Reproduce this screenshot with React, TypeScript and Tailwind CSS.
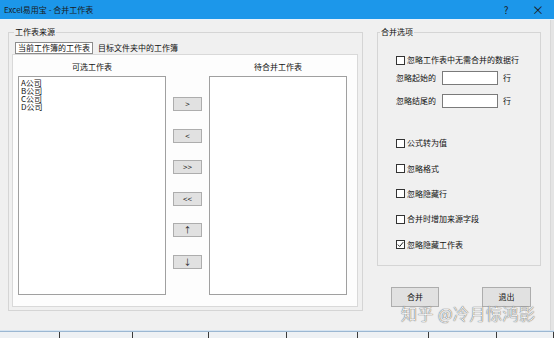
import React from 'react';

const font = "font-['Noto_Sans_CJK_SC','Noto_Sans',sans-serif]";

const moveButtons = ['>', '<', '>>', '<<', '↑', '↓'];
const sheets = ['A公司', 'B公司', 'C公司', 'D公司'];
const stripWidths = [60, 73, 76, 78, 71, 71, 68, 57];

const CheckBox = ({ checked }: { checked?: boolean }) => (
  <span className="w-[9px] h-[9px] border border-[#333333] bg-white flex items-center justify-center shrink-0">
    {checked && (
      <svg width="7" height="7" viewBox="0 0 7 7" fill="none">
        <path d="M0.8 3.6 L2.7 5.5 L6.2 1.2" stroke="#222" strokeWidth="1" />
      </svg>
    )}
  </span>
);

const CheckRow = ({ label, checked, className }: { label: string; checked?: boolean; className: string }) => (
  <div className={`h-[12px] flex items-center ${className}`}>
    <CheckBox checked={checked} />
    <span className="ml-[2px] leading-[12px]">{label}</span>
  </div>
);

const SkipRow = ({ label, className }: { label: string; className: string }) => (
  <div className={`h-[14px] flex items-center ${className}`}>
    <span className="w-[46px] leading-[14px]">{label}</span>
    <div className="w-[56px] h-[14px] border border-[#7a7a7a] bg-white" />
    <span className="ml-[5px] leading-[14px]">行</span>
  </div>
);

export default function App() {
  return (
    <div className={`w-[554px] h-[338px] flex flex-col bg-[#f0f0f0] text-[8px] text-[#111] ${font} overflow-hidden`}>
      {/* title bar */}
      <div className="h-[20px] bg-[#1c97ea] flex items-center pl-[4px] text-[#1a1a1a] border-b border-[#e8f2fb]">
        <span className="leading-[12px]">Excel易用宝 - 合并工作表</span>
        <span className="ml-auto text-[10px] w-[10px] text-center">?</span>
        <span className="ml-[21px] mr-[12px] text-[12px] w-[10px] text-center leading-[12px]">×</span>
      </div>

      <div className="h-[310px] flex">
        <div className="w-[551px] flex pt-[7px] pl-[8px] border-r border-[#d8d8d8]">
          {/* left group */}
          <fieldset className="w-[355px] h-[284px] border border-[#d5d5d5] pl-[3px] pr-[4px]">
            <legend className="ml-[2px] px-[1px] leading-[10px]">工作表来源</legend>
            <div className="mt-[5px] h-[12px] flex items-center">
              <div className="ml-[3px] w-[78px] h-[12px] border border-[#8c8c8c] bg-white flex items-center justify-center leading-[10px]">
                当前工作簿的工作表
              </div>
              <span className="ml-[5px] leading-[12px]">目标文件夹中的工作簿</span>
            </div>
            <div className="h-[253px] border border-[#d9d9d9] bg-[#fdfdfd] flex pl-[5px] pt-[7px] gap-[7px]">
              <div className="w-[148px] flex flex-col">
                <div className="h-[10px] leading-[10px] text-center">可选工作表</div>
                <div className="mt-[4px] h-[219px] border border-[#a0a0a0] bg-white pl-[2px] pt-[2px]">
                  {sheets.map((s) => (
                    <div key={s} className="leading-[8px] h-[8px]">{s}</div>
                  ))}
                </div>
              </div>
              <div className="w-[29px] flex flex-col pt-[35px] gap-[17.6px]">
                {moveButtons.map((b) => (
                  <div
                    key={b}
                    className="h-[14px] border border-[#adadad] bg-[#e1e1e1] flex items-center justify-center leading-[10px] text-[8px]"
                  >
                    {b}
                  </div>
                ))}
              </div>
              <div className="w-[138px] flex flex-col">
                <div className="h-[10px] leading-[10px] text-center">待合并工作表</div>
                <div className="mt-[4px] h-[219px] border border-[#a0a0a0] bg-white" />
              </div>
            </div>
          </fieldset>

          {/* right column */}
          <div className="ml-[14px] w-[164px] flex flex-col">
            <fieldset className="h-[239px] border border-[#d5d5d5]">
              <legend className="ml-[2px] px-[1px] leading-[10px]">合并选项</legend>
              <div className="pl-[18px]">
                <CheckRow className="mt-[17px]" label="忽略工作表中无需合并的数据行" />
                <SkipRow className="mt-[5px]" label="忽略起始的" />
                <SkipRow className="mt-[9px]" label="忽略结尾的" />
                <CheckRow className="mt-[29px]" label="公式转为值" />
                <CheckRow className="mt-[13.5px]" label="忽略格式" />
                <CheckRow className="mt-[13px]" label="忽略隐藏行" />
                <CheckRow className="mt-[13.5px]" label="合并时增加来源字段" />
                <CheckRow className="mt-[13.5px]" label="忽略隐藏工作表" checked />
              </div>
            </fieldset>
            <div className="mt-[21px] flex pl-[14px] gap-[43px]">
              <div className="w-[48px] h-[20px] border border-[#adadad] bg-[#e1e1e1] flex items-center justify-center">合并</div>
              <div className="w-[49px] h-[20px] border border-[#adadad] bg-[#e1e1e1] flex items-center justify-center">退出</div>
            </div>
          </div>
        </div>
        <div className="flex-1 bg-[#e4e4e4]" />
      </div>

      <div className="h-[1px] bg-[#d6e4f1]" />
      <div className="h-[1px] bg-[#9bb7d2]" />
      <div className="h-[6px] flex bg-[#eef1f4]">
        {stripWidths.map((w, i) => (
          <div key={i} className="h-full border-r border-[#3a3a3a]" style={{ width: w }} />
        ))}
      </div>

      {/* watermark */}
      <div
        className="absolute left-[401px] top-[303px] text-[16px] leading-[20px] text-white font-light tracking-[0.5px] [text-shadow:0_0_1px_#555,0_0_1px_#555]"
      >
        知乎 @冷月惊鸿影
      </div>
    </div>
  );
}
